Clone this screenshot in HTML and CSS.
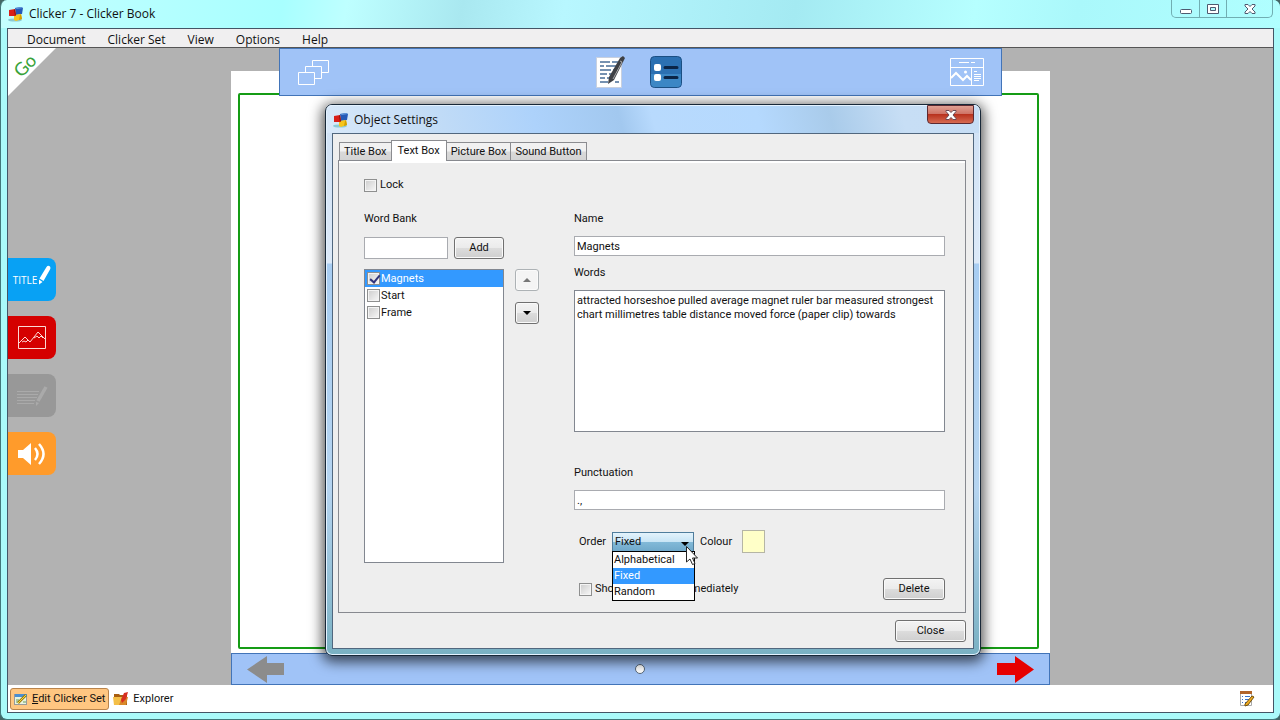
FILE: index.html
```html
<!DOCTYPE html>
<html lang="en">
<head>
<meta charset="utf-8">
<title>Clicker 7 - Clicker Book</title>
<link rel="stylesheet" href="styles.css">
</head>
<body>
<svg class="defs" aria-hidden="true">
  <symbol id="logo" viewBox="0 0 16 16">
    <ellipse cx="7" cy="14" rx="7" ry="1.6" fill="#8bc9d4"/>
    <path d="M7 2l6-1 2 1-1 6-6 1z" fill="#2559b7"/><path d="M7 2l6-1 2 1-6 1z" fill="#5f96dc"/>
    <path d="M6 9l7-1 1 5-6 2-2-1z" fill="#f5c51d"/><path d="M13 8l1 5-3 1 1-5z" fill="#d4a000"/>
    <path d="M1 4l6-1 1 6-1 1-6 0z" fill="#d91e18"/><path d="M6 4l1-1 1 6-1 1z" fill="#92120d"/>
  </symbol>
</svg>
<div class="window">
  <header class="titlebar">
    <svg class="logo"><use href="#logo"/></svg>
    <h1 class="title">Clicker 7 - Clicker Book</h1>
    <div class="window-controls">
      <button aria-label="Minimise"><svg width="14" height="12" viewBox="0 0 14 12"><rect x="1.500" y="6.500" width="11" height="4" rx="1" fill="#fff" stroke="#4e5a70"/></svg></button>
      <button aria-label="Restore"><svg width="14" height="12" viewBox="0 0 14 12"><path d="M1.500 1.500h11v9h-11zM4.500 4.500h5v3h-5z" fill="#fff" stroke="#4e5a70" fill-rule="evenodd"/></svg></button>
      <button class="wide" aria-label="Close window"><svg width="14" height="12" viewBox="0 0 14 12"><path d="M2 1.500h3l2 2 2-2h3v1.500l-3 3 3 3v1.500h-3l-2-2-2 2h-3v-1.500l3-3-3-3z" fill="#fff" stroke="#4e5a70"/></svg></button>
    </div>
  </header>

  <div class="client">
    <nav class="menubar">
      <button>Document</button><button>Clicker Set</button><button>View</button><button>Options</button><button>Help</button>
    </nav>

    <main class="stage">
      <aside class="side">
        <button class="go"><span>Go</span></button>
        <div class="tools">
          <button class="tool blue"><span>TITLE</span><svg width="13" height="21" viewBox="0 0 13 21"><path d="M8.500 2Q10 0 12 1.500Q13 3 12 4.500L5.500 16L1.500 13.500zM1 14.500L4.500 17L1 19.500z" fill="#fff"/></svg></button>
          <button class="tool red" aria-label="Picture"><svg width="28" height="23" viewBox="0 0 28 23" fill="none" stroke="#fbd9d5"><path d="M.5.500h27v22H.5zM1 17l6-6 3 3-2 2-2-1-2 1M10 14l2 2 8-10 7 7M16 12l3-2 2 2 2-2 2 2"/></svg></button>
          <button class="tool grey" aria-label="Text" disabled><svg width="32" height="20" viewBox="0 0 32 20" stroke="#aaa" fill="none"><path d="M1 5.500h22M1 8.500h21M1 11.500h20M1 14.500h18M1 17.500h17"/><path d="M30 1L22 15" stroke-width="3.500"/><path d="M20 16l3 1-3 3z" fill="#aaa" stroke="none"/></svg></button>
          <button class="tool orange" aria-label="Sound"><svg width="28" height="24" viewBox="0 0 28 24"><path d="M0 8h5l8-7v22l-8-7H0z" fill="#fff"/><path d="M17 6q5 6 0 12M21 2q9 10 0 20" fill="none" stroke="#fff" stroke-width="2.500"/></svg></button>
        </div>
      </aside>

      <section class="book">
        <div class="page"><div class="page-frame"></div></div>
        <div class="toolbar">
          <button aria-label="Sets"><svg width="32" height="26" viewBox="0 0 32 26" fill="#a0c3f7" stroke="#fff"><path d="M15.500 1.500h16v12h-16z"/><path d="M8.500 7.500h16v12h-16z"/><path d="M1.500 13.500h16v12h-16z"/></svg></button>
          <div class="toolbar-mid">
            <button aria-label="Edit text"><svg width="30" height="32" viewBox="0 0 30 32"><path d="M.5 1.500h25v30H.5z" fill="#fff" stroke="#c8d0df"/><path d="M4 6h10m2 0h6M4 10h4m2 0h10M4 14h11m2 0h4M4 18h7m2 0h6M4 22h5m2 0h5M4 26h8m7 0h4" stroke="#486e98" stroke-width="1.500"/><path d="M24 2l3-2 2 2-2 4-9 18-6 4 1-7z" fill="#3e4045"/><path d="M24 5l2 1-9 17" fill="none" stroke="#aaa"/></svg></button>
            <button aria-label="Cell options"><svg width="32" height="32" viewBox="0 0 32 32"><rect x=".5" y=".5" width="31" height="31" rx="4" fill="#2b70b2" stroke="#1b4f83"/><path d="M1 18h30v9q0 4-4 4H5q-4 0-4-4z" fill="#3c87c5"/><rect x="4" y="8" width="7" height="7" rx="2" fill="#fff"/><rect x="4" y="18" width="7" height="7" rx="2" fill="#fff"/><path d="M15 11.500h12M15 21.500h12" stroke="#0b2547" stroke-width="3" stroke-linecap="round"/></svg></button>
          </div>
          <button aria-label="Page layout"><svg width="34" height="28" viewBox="0 0 34 28" fill="none" stroke="#fff"><path d="M.5.500h33v27H.5zM.5 9.500h33M21.500 10v17M9 4.500h10m2 0h4M24 13.500h3m-3 3h7m-7 2h7m-7 2h7m-7 2h5"/><path d="M1 20l5-5 7 7 4-4 4 4" stroke-width="2"/><circle cx="15.500" cy="14" r="1.500" fill="#fff" stroke="none"/></svg></button>
        </div>
        <div class="pager">
          <button aria-label="Previous page"><svg width="37" height="27" viewBox="0 0 37 27"><path d="M0 13.500L20 0v7h17v12H20v8z" fill="#8c8c8c"/></svg></button>
          <button class="dot" aria-label="Page 1"></button>
          <button aria-label="Next page"><svg width="37" height="27" viewBox="0 0 37 27"><path d="M37 13.500L18 0v7H0v12h18v8z" fill="#e60000"/></svg></button>
        </div>
      </section>
    </main>

    <footer class="statusbar">
      <button class="status active"><svg width="14" height="14" viewBox="0 0 14 14"><rect x=".5" y="2.500" width="12" height="10" fill="#e8f4e0" stroke="#999"/><path d="M1 2h12v3H1z" fill="#4a8ed2"/><path d="M2 8h3m-3 2h2m5 0h3" stroke="#6b9a5b"/><path d="M4 11l8-8" stroke="#a37c09" stroke-width="2.500"/><path d="M4 11l8-8" stroke="#f2da45"/></svg><span><u>E</u>dit Clicker Set</span></button>
      <button class="status"><svg width="16" height="14" viewBox="0 0 16 14"><path d="M1 2h5l1 1h7v10H1z" fill="#a85e10"/><path d="M0 5h9l-2 8H1z" fill="#f4bf48"/><path d="M9 5h6l-2 8H6z" fill="#d9892a"/><path d="M11 1l4-1-2 7-4 4-1-3z" fill="#d72e20"/></svg><span>Explorer</span></button>
      <button class="notes" aria-label="Notes"><svg width="16" height="16" viewBox="0 0 16 16"><path d="M1.500 1.500h11v13h-11z" fill="#fff" stroke="#aaa"/><path d="M1 0h12v3H1z" fill="#b2652a"/><path d="M3 5.500h1m2 0h5m-8 3h1m2 0h4m-7 3h1m2 0h2" stroke="#3873cc"/><path d="M6 13l7-8 2 1-6 8-3 1z" fill="#edaa22" stroke="#72500c"/></svg></button>
    </footer>
  </div>
</div>

<section class="dialog" role="dialog" aria-labelledby="dialog-title">
  <header class="dialog-head">
    <svg class="logo"><use href="#logo"/></svg>
    <h2 class="title" id="dialog-title">Object Settings</h2>
    <button class="dialog-x" aria-label="Close dialog"><svg width="12" height="10" viewBox="0 0 12 10"><path d="M1 .5h3l2 2 2-2h3v1l-3 3.500 3 3.500v1H8l-2-2-2 2H1v-1L4 5 1 1.500z" fill="#fff" stroke="#6b4a55"/></svg></button>
  </header>
  <div class="dialog-body">
    <div class="tabs" role="tablist">
      <button role="tab">Title Box</button><button role="tab" class="selected" aria-selected="true">Text Box</button><button role="tab">Picture Box</button><button role="tab">Sound Button</button>
    </div>
    <div class="panel">
      <label class="check"><input type="checkbox"><span>Lock</span></label>
      <div class="columns">
        <div class="bank">
          <label for="bank">Word Bank</label>
          <div class="bank-add"><input class="field" id="bank" type="text"><button class="btn">Add</button></div>
          <div class="bank-main">
            <ul class="list">
              <li class="on"><label class="check"><input type="checkbox" checked><span>Magnets</span></label></li>
              <li><label class="check"><input type="checkbox"><span>Start</span></label></li>
              <li><label class="check"><input type="checkbox"><span>Frame</span></label></li>
            </ul>
            <div class="movers">
              <button class="btn" aria-label="Move up" disabled><svg width="8" height="4" viewBox="0 0 8 4"><path d="M0 4l4-4 4 4z" fill="#777"/></svg></button>
              <button class="btn" aria-label="Move down"><svg width="8" height="4" viewBox="0 0 8 4"><path d="M0 0h8L4 4z"/></svg></button>
            </div>
          </div>
        </div>
        <div class="details">
          <label for="name">Name</label>
          <input class="field" id="name" type="text" value="Magnets">
          <label for="words">Words</label>
          <textarea class="field words" id="words" spellcheck="false">attracted horseshoe pulled average magnet ruler bar measured strongest chart millimetres table distance moved force (paper clip) towards</textarea>
          <label class="spaced" for="punct">Punctuation</label>
          <input class="field" id="punct" type="text" value=".,">
          <div class="order-row">
            <label for="order">Order</label>
            <div class="combo">
              <select id="order"><option>Alphabetical</option><option selected>Fixed</option><option>Random</option></select>
              <svg class="combo-arrow" width="8" height="4" viewBox="0 0 8 4"><path d="M0 0h8L4 4z"/></svg>
              <ul class="options"><li>Alphabetical</li><li class="on">Fixed</li><li>Random</li></ul>
              <svg class="cursor" width="12" height="19" viewBox="0 0 12 19"><path d="M.5.500v15.500l3.500-3 2.500 5.500 2.500-1-2.500-5.500h5z" fill="#fff" stroke="#222"/></svg>
            </div>
            <label for="colour">Colour</label>
            <button class="swatch" id="colour"></button>
          </div>
          <div class="last-row">
            <label class="check"><input type="checkbox"><span>Show word bank immediately</span></label>
            <button class="btn">Delete</button>
          </div>
        </div>
      </div>
    </div>
    <div class="dialog-foot"><button class="btn">Close</button></div>
  </div>
</section>
</body>
</html>
```
FILE: styles.css
```css
* { box-sizing: border-box; }
body {
  margin: 0;
  background: #466;
  color: #111;
  font: 11px/18px Roboto, "Liberation Sans", sans-serif;
}
button, input, textarea, select { font: inherit; color: inherit; }
button { margin: 0; padding: 0; border: 0; background: none; display: flex; align-items: center; justify-content: center; }
svg { display: block; flex: none; }
ul { list-style: none; margin: 0; padding: 0; }
.defs { position: absolute; width: 0; height: 0; }
.logo { width: 16px; height: 16px; }
.title { margin: 0; font: 12px/18px "Open Sans", "Noto Sans", sans-serif; }

/* Application window */
.window {
  display: flex;
  flex-direction: column;
  height: 100vh;
  padding: 0 6px 6px 7px;
  border: 1px solid #42777a;
  border-width: 0 0 1px 1px;
  border-radius: 7px;
  background: linear-gradient(100deg, #c5ffff 0, #a8ffff 22%, #beffff 27%, #a9e8f0 36%, #b8f7ff 44%, #a4eaf2 62%, #b6ffff 76%, #aaf8fb 84%, #b0ffff 100%) top / 100% 28px no-repeat, #aafafa;
}
.titlebar { display: flex; align-items: center; gap: 5px; height: 28px; padding-right: 1px; }
.window-controls {
  display: flex;
  align-self: flex-start;
  height: 18px;
  margin-left: auto;
  border: 1px solid #71aeb2;
  border-top: 0;
  border-radius: 0 0 5px 5px;
}
.window-controls button { width: 27px; }
.window-controls button + button { border-left: 1px solid #71aeb2; }
.window-controls .wide { width: 46px; }
.client { flex: 1; display: flex; flex-direction: column; border: 1px solid #456; margin-left: -1px; }
.menubar {
  display: flex;
  gap: 22px;
  height: 19px;
  padding-left: 19px;
  background: #f0eff0;
  border-bottom: 1px solid #555;
  font: 12px/18px "Open Sans", "Noto Sans", sans-serif;
}
.menubar button { padding-top: 3px; }
.stage { flex: 1; display: grid; grid-template-columns: 3fr 11fr 3fr; background: #b2b2b2; }
.go {
  width: 48px;
  height: 48px;
  background: #fff;
  clip-path: polygon(0 0, 100% 0, 0 100%);
  color: #39a339;
  font: 18px/18px Lato, sans-serif;
  padding: 0 14px 14px 0;
}
.go span { transform: rotate(-45deg); }
.tools { display: flex; flex-direction: column; gap: 15px; margin-top: 162px; }
.tool { width: 48px; height: 43px; border-radius: 0 8px 8px 0; color: #fff; font: 10px/18px "Open Sans", sans-serif; }
.blue { gap: 1px; background: #08a1f4; }
.blue svg { margin-bottom: 8px; }
.red { background: #d50000; }
.grey { background: #989898; }
.orange { background: #ff9b2b; }
.book { position: relative; display: flex; flex-direction: column; }
.page { flex: 1; margin-top: 23px; padding: 22px 11px 4px 7px; background: #fff; }
.page-frame { height: 100%; border: 2px solid #159c15; border-radius: 2px; }
.toolbar {
  position: absolute;
  top: 0;
  left: 48px;
  right: 48px;
  display: flex;
  align-items: center;
  justify-content: space-between;
  height: 48px;
  padding: 0 17px;
  background: #a0c3f7;
  border: 1px solid #4274b8;
}
.toolbar-mid { display: flex; gap: 24px; }
.pager {
  display: flex;
  align-items: center;
  justify-content: space-between;
  height: 32px;
  padding: 0 15px;
  background: #a0c3f7;
  border: 1px solid #4274b8;
}
.dot { width: 10px; height: 10px; border: 1px solid #567; border-radius: 50%; background: #fff; }
.statusbar { display: flex; align-items: center; gap: 4px; height: 27px; padding: 0 18px 0 2px; background: #fff; }
.status { gap: 4px; height: 22px; padding: 0 4px 0 0; }
.active { padding: 0 3px; border: 1px solid #b8834b; border-radius: 3px; background: #ffc681; }
.notes { margin-left: auto; }

/* Object Settings */
.dialog {
  position: absolute;
  left: 325px;
  top: 104px;
  width: 656px;
  padding: 0 6px 6px;
  border: 1px solid #182838;
  border-radius: 7px;
  background: linear-gradient(#cfe1f5 0, #dce9f8 158px, #a8cdf2 159px, #b5d4f0 70%, #7ab1c3 100%);
  box-shadow: inset 0 0 0 1px #e4f2ff, 0 3px 13px 3px rgba(0, 0, 0, .65);
}
.dialog-head {
  display: flex;
  align-items: center;
  gap: 5px;
  height: 28px;
  margin: 0 -5px;
  padding: 0 5px 0 6px;
  border-top: 1px solid #e4f2ff;
  border-radius: 5px 5px 0 0;
  background: linear-gradient(75deg, #d8e8f9 0, #c4ddf6 15%, #add2fb 32%, #a2c8ef 45%, #b8dafd 50%, #b5d9fe 66%, #a9cbea 77%, #c7def5 88%, #c6ddf5 100%);
}
.dialog-x {
  align-self: flex-start;
  width: 47px;
  height: 19px;
  margin: -1px 0 0 auto;
  border: 1px solid #5c2931;
  border-radius: 0 0 4px 4px;
  background: linear-gradient(#e0a093, #cf7467 45%, #b8321f 50%, #d76b52);
}
.dialog-body { padding: 8px 7px 6px 5px; background: #eee; border: 1px solid #51677e; }
.tabs { display: flex; align-items: flex-end; height: 20px; margin-top: -2px; padding-left: 1px; }
.tabs button {
  height: 18px;
  padding: 1px 4px 0;
  border: 1px solid #8b8c90;
  border-bottom: 0;
  background: linear-gradient(#f1f1f1 45%, #d9d9d9 55%, #d4d4d4);
}
.tabs button + button { margin-left: -1px; }
.tabs .selected { position: relative; height: 21px; margin-bottom: -1px; padding: 0 6px 1px; background: #fff; }
.panel {
  border: 1px solid #87898f;
  box-shadow: inset 0 2px #fff;
  padding: 15px 20px 12px 25px;
}
.check { display: flex; align-items: center; gap: 3px; width: max-content; }
.check input {
  appearance: none;
  width: 13px;
  height: 13px;
  margin: 0;
  border: 1px solid #8e8f8f;
  background: linear-gradient(135deg, #ccc, #f8f8f8);
  box-shadow: inset 0 0 0 1px #f4f4f4;
}
.check input:checked::after {
  content: "";
  display: block;
  width: 4px;
  height: 8px;
  margin: 0 0 0 4px;
  border: solid #31347c;
  border-width: 0 2px 2px 0;
  transform: rotate(40deg);
}
.columns { display: grid; grid-template-columns: 175px 1fr; column-gap: 35px; margin-top: 16px; }
.bank { display: flex; flex-direction: column; }
.field { width: 100%; height: 20px; padding: 0 2px; border: 1px solid #a9abb0; background: #fff; outline: 0; }
.bank-add { display: flex; gap: 6px; margin: 9px 0 10px; padding-right: 35px; }
.bank-add .field { width: auto; min-width: 0; flex: 1; height: 22px; }
.bank-add .btn { width: 50px; }
.btn {
  height: 22px;
  border: 1px solid #707070;
  border-radius: 3px;
  background: linear-gradient(#f3f3f3, #ebebeb 48%, #dcdcdc 52%, #cfcfcf);
  box-shadow: inset 0 0 0 1px #fafafa;
}
.btn:disabled { border-color: #adb2b5; background: #f4f4f4; }
.bank-main { display: flex; gap: 11px; }
.list { flex: 1; height: 294px; border: 1px solid #828790; background: #fff; }
.list li { height: 17px; padding-left: 2px; line-height: 17px; }
.list .check { gap: 1px; height: 17px; }
.on { background: #3399ff; color: #fff; }
.movers { display: flex; flex-direction: column; gap: 11px; }
.movers .btn { width: 24px; }
.details { display: flex; flex-direction: column; gap: 8px; }
.words { display: block; height: 142px; padding: 3px 2px; border-color: #828790; line-height: 14px; resize: none; }
.spaced { margin-top: 24px; }
.order-row { display: flex; align-items: center; gap: 6px; height: 23px; margin-top: 12px; padding-left: 5px; }
.combo { position: relative; width: 82px; }
.combo select {
  appearance: none;
  display: block;
  width: 100%;
  height: 20px;
  padding: 0 2px;
  border: 1px solid #4f7d9c;
  border-radius: 0;
  background: linear-gradient(#e3f3fc, #c9e5f5 48%, #82b9d8 52%, #70a9cb);
}
.combo-arrow { position: absolute; right: 5px; top: 10px; }
.options { position: absolute; top: 19px; left: 0; width: 83px; border: 1px solid #000; background: #fff; line-height: 16px; }
.options li { padding-left: 1px; }
.cursor { position: absolute; left: 74px; top: 14px; }
.swatch { width: 23px; height: 23px; margin-left: 4px; border: 1px solid #b5b5a5; background: #ffffc8; }
.last-row { display: flex; align-items: center; justify-content: space-between; margin-top: 17px; padding-left: 5px; }
.last-row .btn { width: 62px; }
.dialog-foot { display: flex; justify-content: flex-end; padding-top: 7px; }
.dialog-foot .btn { width: 71px; }
```
